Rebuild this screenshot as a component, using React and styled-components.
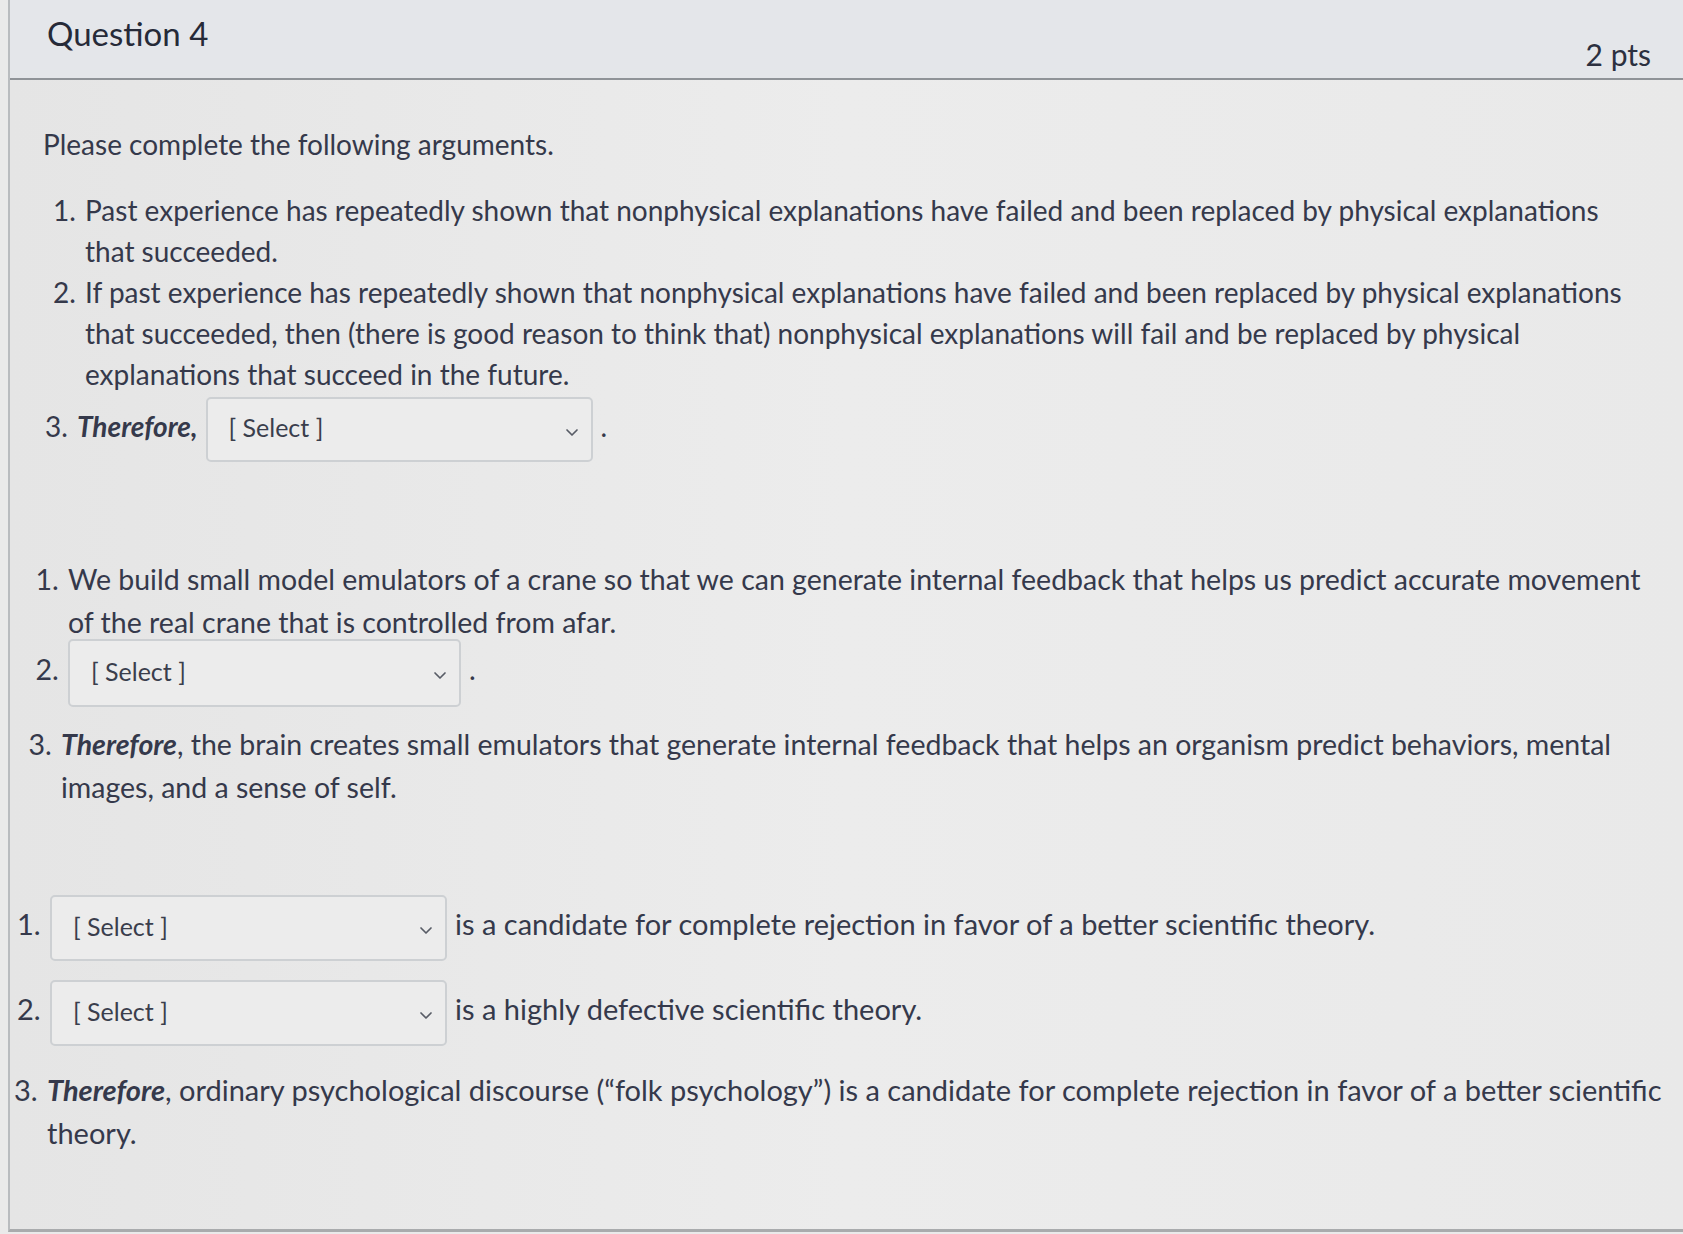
import React from "react";
import styled, { createGlobalStyle } from "styled-components";

const Global = createGlobalStyle`
  html, body {
    margin: 0;
    padding: 0;
    background: #eaeaea;
  }
  body {
    font-family: Lato, "Open Sans", sans-serif;
    color: #35394b;
  }
`;

const Panel = styled.div`
  margin-left: 8px;
  min-height: 1232px;
  border-left: 2px solid #b9bcbf;
  border-bottom: 3px solid #a9abad;
  box-sizing: border-box;
  background: linear-gradient(90deg, #e5e5e5 0%, #ececec 50%, #e9e9e9 100%);
`;

const Header = styled.div`
  display: flex;
  justify-content: space-between;
  align-items: flex-start;
  height: 80px;
  padding: 13px 32px 0 37px;
  box-sizing: border-box;
  background: #e4e6ea;
  border-bottom: 2px solid #8f9398;
`;

const Title = styled.h2`
  margin: 0;
  font-size: 33px;
  font-weight: 400;
  color: #262a38;
`;

const Points = styled.span`
  margin-top: 23px;
  font-size: 30px;
  color: #2c3040;
`;

const Body = styled.div`
  padding-top: 44px;
`;

const Intro = styled.p`
  margin: 0 0 25px 33px;
  font-size: 28px;
  line-height: 41px;
`;

const List = styled.ol`
  margin: ${(p) => p.$margin || "0"};
  padding-left: ${(p) => p.$pad}px;
  width: ${(p) => p.$width}px;
  box-sizing: border-box;
  font-size: ${(p) => p.$size}px;
  line-height: ${(p) => p.$line}px;
`;

const Item = styled.li`
  padding-left: 2px;
  margin-left: ${(p) => p.$shift || 0}px;
  margin-bottom: ${(p) => p.$gap || 0}px;
`;

const SelectBox = styled.span`
  display: inline-flex;
  justify-content: space-between;
  align-items: center;
  box-sizing: border-box;
  width: ${(p) => p.$w}px;
  height: ${(p) => p.$h}px;
  padding: 0 10px 4px 21px;
  margin: 0 8px 0 ${(p) => p.$lead}px;
  vertical-align: middle;
  border: 2px solid #cdd0d3;
  border-radius: 5px;
  background: #ececec;
  font-size: 25px;
  line-height: 1;
  color: #3a3e4c;
`;

const Chevron = () => (
  <svg width="18" height="18" viewBox="0 0 18 18" style={{ marginTop: 8 }}>
    <path d="M4 7 L9 12 L14 7" fill="none" stroke="#585c66" strokeWidth="1.7" strokeLinecap="round" strokeLinejoin="round" />
  </svg>
);

const Select = ({ w, h = 65, lead = 0 }) => (
  <SelectBox $w={w} $h={h} $lead={lead}>
    <span>[ Select ]</span>
    <Chevron />
  </SelectBox>
);

const Lead = styled.strong`
  font-style: italic;
  font-weight: 700;
`;

export default function App() {
  return (
    <>
      <Global />
      <Panel>
        <Header>
          <Title>Question 4</Title>
          <Points>2 pts</Points>
        </Header>
        <Body>
          <Intro>Please complete the following arguments.</Intro>
          <List $pad={73} $width={1637} $size={28} $line={41}>
            <Item>
              Past experience has repeatedly shown that nonphysical explanations have failed and been replaced by physical explanations that succeeded.
            </Item>
            <Item $gap={2}>
              If past experience has repeatedly shown that nonphysical explanations have failed and been replaced by physical explanations that succeeded, then (there is good reason to think that) nonphysical explanations will fail and be replaced by physical explanations that succeed in the future.
            </Item>
            <Item $shift={-8}>
              <Lead>Therefore,</Lead>
              <Select w={387} h={65} lead={8} />.
            </Item>
          </List>
          <List $pad={56} $width={1638} $size={28.5} $line={43} $margin="96px 0 0 0">
            <Item $gap={-5}>
              We build small model emulators of a crane so that we can generate internal feedback that helps us predict accurate movement of the real crane that is controlled from afar.
            </Item>
            <Item $gap={16}>
              <Select w={393} h={68} />.
            </Item>
            <Item $shift={-7}>
              <Lead>Therefore</Lead>, the brain creates small emulators that generate internal feedback that helps an organism predict behaviors, mental images, and a sense of self.
            </Item>
          </List>
          <List $pad={38} $width={1668} $size={29} $line={43} $margin="86px 0 0 0">
            <Item $gap={19}>
              <Select w={397} h={66} />is a candidate for complete rejection in favor of a better scientific theory.
            </Item>
            <Item $gap={22}>
              <Select w={397} h={66} />is a highly defective scientific theory.
            </Item>
            <Item $shift={-3}>
              <Lead>Therefore</Lead>, ordinary psychological discourse (“folk psychology”) is a candidate for complete rejection in favor of a better scientific theory.
            </Item>
          </List>
        </Body>
      </Panel>
    </>
  );
}
